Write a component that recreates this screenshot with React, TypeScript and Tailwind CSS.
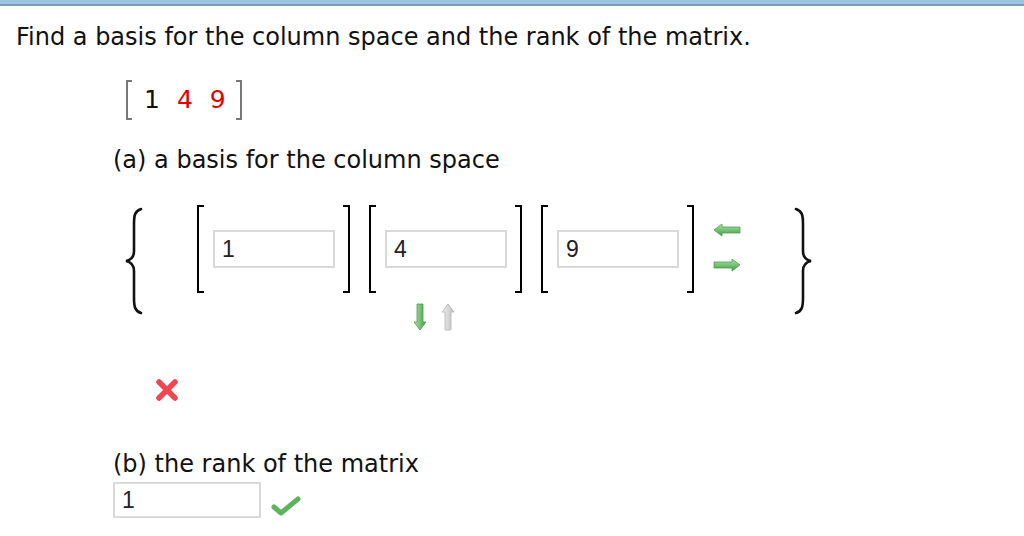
import React from "react";

const FONT = { fontFamily: '"DejaVu Sans", Verdana, sans-serif' };
const INPUT_FONT = { fontFamily: '"Liberation Sans", Arial, sans-serif' };

function Brace({ flip }: { flip?: boolean }) {
  return (
    <svg
      width="20"
      height="108"
      viewBox="0 0 20 108"
      fill="none"
      aria-hidden="true"
      style={flip ? { transform: "scaleX(-1)" } : undefined}
    >
      <path
        d="M17 2 C11 4 10 8 10 17 L10 44 C10 50 7 53 2 54 C7 55 10 58 10 64 L10 91 C10 100 11 104 17 106"
        stroke="#111"
        strokeWidth="2.6"
        strokeLinecap="round"
      />
    </svg>
  );
}

function Bracket({ side, h, color = "border-black", w = "w-[7px]" }: { side: "l" | "r"; h: string; color?: string; w?: string }) {
  return (
    <div
      className={[
        w,
        h,
        color,
        "border-t-2 border-b-2",
        side === "l" ? "border-l-2" : "border-r-2",
      ].join(" ")}
    />
  );
}

function Field({ value, w = "w-[122px]", h = "h-[38px]" }: { value: string; w?: string; h?: string }) {
  return (
    <div
      className={`${w} ${h} flex items-center border-2 border-[#d9d9d9] bg-white pl-[7px] text-[23px] leading-none text-[#222]`}
      style={INPUT_FONT}
    >
      {value}
    </div>
  );
}

function Vector({ value }: { value: string }) {
  return (
    <div className="flex items-center">
      <Bracket side="l" h="h-[88px]" />
      <div className="ml-[9px] mr-[8px]">
        <Field value={value} />
      </div>
      <Bracket side="r" h="h-[88px]" />
    </div>
  );
}

function GreenDefs({ id, vertical }: { id: string; vertical?: boolean }) {
  return (
    <defs>
      <linearGradient id={id} x1="0" y1="0" x2={vertical ? "1" : "0"} y2={vertical ? "0" : "1"}>
        <stop offset="0" stopColor="#b4e3ad" />
        <stop offset="1" stopColor="#3f9d43" />
      </linearGradient>
    </defs>
  );
}

function ArrowLeft() {
  return (
    <svg width="28" height="14" viewBox="0 0 28 14" aria-hidden="true">
      <GreenDefs id="gl" />
      <path d="M1 7 L9 1 L9 4 L27 4 L27 10 L9 10 L9 13 Z" fill="url(#gl)" stroke="#4a9e4a" strokeWidth="0.8" strokeLinejoin="round" />
    </svg>
  );
}

function ArrowRight() {
  return (
    <svg width="28" height="14" viewBox="0 0 28 14" aria-hidden="true">
      <GreenDefs id="gr" />
      <path d="M27 7 L19 1 L19 4 L1 4 L1 10 L19 10 L19 13 Z" fill="url(#gr)" stroke="#4a9e4a" strokeWidth="0.8" strokeLinejoin="round" />
    </svg>
  );
}

function ArrowDown() {
  return (
    <svg width="14" height="28" viewBox="0 0 14 28" aria-hidden="true">
      <GreenDefs id="gd" vertical />
      <path d="M7 27 L1 19 L4 19 L4 1 L10 1 L10 19 L13 19 Z" fill="url(#gd)" stroke="#4a9e4a" strokeWidth="0.8" strokeLinejoin="round" />
    </svg>
  );
}

function ArrowUp() {
  return (
    <svg width="14" height="28" viewBox="0 0 14 28" aria-hidden="true">
      <defs>
        <linearGradient id="gu" x1="0" y1="0" x2="1" y2="0">
          <stop offset="0" stopColor="#f2f2f2" />
          <stop offset="1" stopColor="#bdbdbd" />
        </linearGradient>
      </defs>
      <path d="M7 1 L1 9 L4 9 L4 27 L10 27 L10 9 L13 9 Z" fill="url(#gu)" stroke="#b5b5b5" strokeWidth="0.8" strokeLinejoin="round" />
    </svg>
  );
}

function RedX() {
  return (
    <svg width="26" height="24" viewBox="0 0 26 24" aria-hidden="true">
      <path d="M5 4 L21 20 M21 4 L5 20" stroke="#ef4752" strokeWidth="5.5" strokeLinecap="round" />
    </svg>
  );
}

function Check() {
  return (
    <svg width="30" height="20" viewBox="0 0 30 20" aria-hidden="true">
      <path d="M3 11 L10 17 L27 3" stroke="#5cb55e" strokeWidth="5" strokeLinecap="round" strokeLinejoin="round" fill="none" />
    </svg>
  );
}

export default function App() {
  return (
    <div className="h-[536px] w-[1024px] overflow-hidden bg-white text-[#111]" style={FONT}>
      {/* top strip */}
      <div className="h-[6px] border-b-2 border-[#7b9bb6] bg-[#9ec4e3]" />

      <div className="pl-[16px] pt-[16px] text-[24px] leading-[30px]">
        Find a basis for the column space and the rank of the matrix.
      </div>

      {/* matrix */}
      <div className="ml-[126px] mt-[28px] flex items-center">
        <Bracket side="l" h="h-[40px]" color="border-[#777]" w="w-[6px]" />
        <div className="flex gap-[17px] pl-[12px] pr-[10px] text-[25px] leading-[30px]">
          <span>1</span>
          <span className="text-[#e30000]">4</span>
          <span className="text-[#e30000]">9</span>
        </div>
        <Bracket side="r" h="h-[40px]" color="border-[#777]" w="w-[6px]" />
      </div>

      <div className="ml-[113px] mt-[25px] text-[24px] leading-[30px]">(a) a basis for the column space</div>

      {/* column space basis */}
      <div className="ml-[124px] mt-[30px] flex items-start">
        <div className="mt-[2px]">
          <Brace />
        </div>
        <div className="ml-[53px]">
          <div className="flex items-center gap-[19px]">
            <Vector value="1" />
            <Vector value="4" />
            <Vector value="9" />
            <div className="-mt-[4px] flex flex-col gap-[21px]">
              <ArrowLeft />
              <ArrowRight />
            </div>
          </div>
          <div className="ml-[216px] mt-[10px] flex gap-[14px]">
            <ArrowDown />
            <ArrowUp />
          </div>
        </div>
        <div className="ml-[52px] mt-[2px]">
          <Brace flip />
        </div>
      </div>

      <div className="ml-[154px] mt-[47px]">
        <RedX />
      </div>

      <div className="ml-[113px] mt-[47px] text-[24px] leading-[30px]">(b) the rank of the matrix</div>
      <div className="ml-[113px] mt-[3px] flex items-end gap-[10px]">
        <Field value="1" w="w-[148px]" h="h-[36px]" />
        <div className="mb-[2px]">
          <Check />
        </div>
      </div>
    </div>
  );
}
